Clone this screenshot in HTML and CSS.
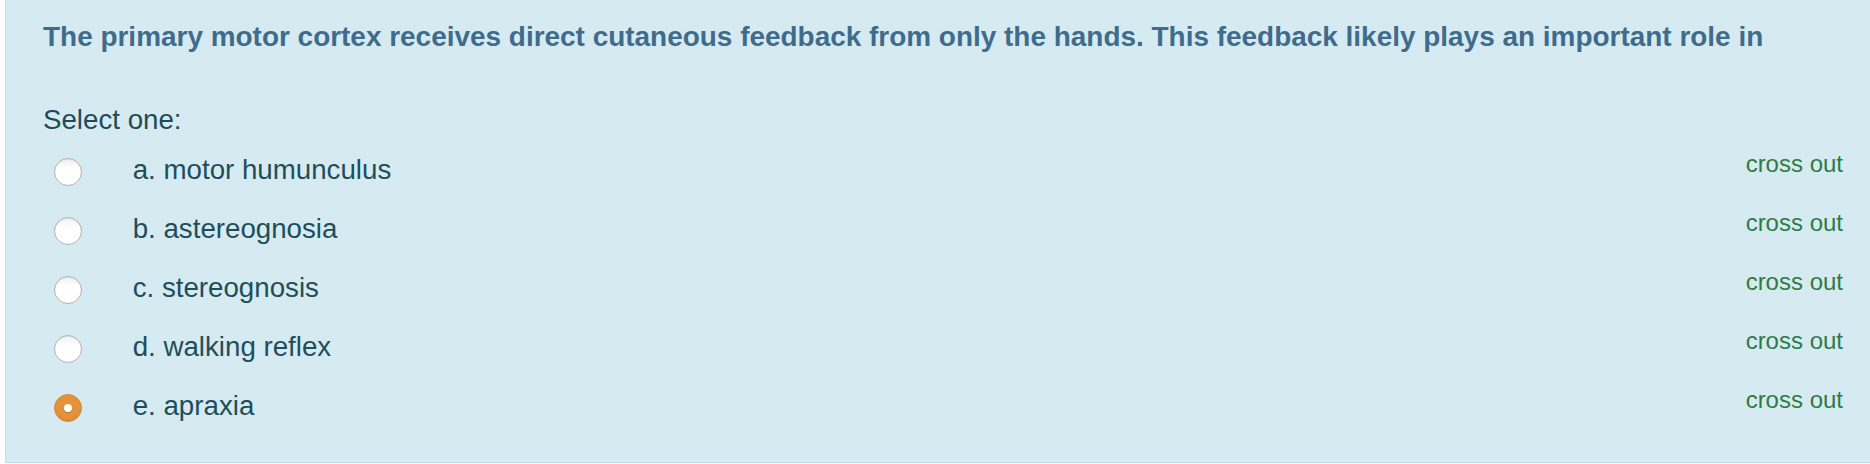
FILE: index.html
```html
<!DOCTYPE html>
<html>
<head>
<meta charset="utf-8">
<link rel="stylesheet" href="styles.css">
</head>
<body>
<div class="formulation">
  <div class="qtext">The primary motor cortex receives direct cutaneous feedback from only the hands. This feedback likely plays an important role in</div>
  <div class="ablock">
    <div class="prompt">Select one:</div>
    <div class="answer">
      <div class="row">
        <span class="radio"></span>
        <span class="label">a. motor humunculus</span>
        <span class="cross">cross out</span>
      </div>
      <div class="row">
        <span class="radio"></span>
        <span class="label">b. astereognosia</span>
        <span class="cross">cross out</span>
      </div>
      <div class="row">
        <span class="radio"></span>
        <span class="label">c. stereognosis</span>
        <span class="cross">cross out</span>
      </div>
      <div class="row">
        <span class="radio"></span>
        <span class="label">d. walking reflex</span>
        <span class="cross">cross out</span>
      </div>
      <div class="row">
        <span class="radio checked"></span>
        <span class="label">e. apraxia</span>
        <span class="cross">cross out</span>
      </div>
    </div>
  </div>
</div>
</body>
</html>
```

FILE: styles.css
```css
html, body {
  margin: 0;
  padding: 0;
  background: #ffffff;
}

body {
  font-family: "Liberation Sans", Arial, Helvetica, sans-serif;
  overflow: hidden;
}

.formulation {
  margin-left: 5px;
  height: 463px;
  box-sizing: border-box;
  background: #d6ebf1;
  border-left: 1px solid #bfe0e8;
  border-bottom: 1px solid #bfe0e8;
  padding: 16px 27px 0 37px;
}

.qtext {
  font-size: 27.95px;
  line-height: 41.5px;
  font-weight: bold;
  color: #3f6c8d;
  white-space: nowrap;
}

.ablock {
  margin-top: 41px;
}

.prompt {
  font-size: 27.7px;
  line-height: 41.5px;
  color: #1f4b57;
}

.answer {
  margin-top: 8.5px;
  display: flex;
  flex-direction: column;
}

.row {
  display: flex;
  align-items: flex-start;
  height: 59.1px;
}

.radio {
  flex: none;
  width: 26px;
  height: 26px;
  margin: 9px 0 0 11px;
  border-radius: 50%;
  border: 1px solid #b3b3b3;
  background: linear-gradient(#f2f2f2, #ffffff 40%);
  box-shadow: inset 0 1px 1px rgba(0, 0, 0, 0.08);
  position: relative;
}

.radio.checked {
  border-color: #dd8c34;
  background: #e3923a;
  box-shadow: inset 0 -1px 2px rgba(0, 0, 0, 0.1);
}

.radio.checked::after {
  content: "";
  position: absolute;
  left: 9px;
  top: 9px;
  width: 8px;
  height: 8px;
  border-radius: 50%;
  background: #ffffff;
  box-shadow: 0 1px 1px rgba(0, 0, 0, 0.2);
}

.label {
  margin-left: 50.7px;
  font-size: 27.7px;
  line-height: 41.5px;
  color: #1f4e5b;
  flex: 1;
}

.cross {
  font-size: 24px;
  line-height: 30px;
  color: #2e7b46;
  white-space: nowrap;
}
```
